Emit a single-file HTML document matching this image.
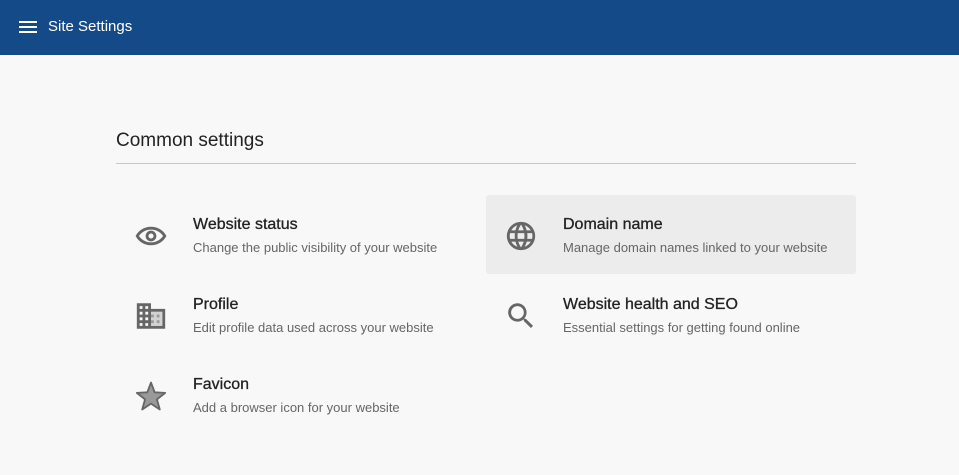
<!DOCTYPE html>
<html><head><style>
*{margin:0;padding:0;box-sizing:border-box}
body{width:959px;height:475px;background:#f8f8f8;font-family:"Liberation Sans",sans-serif;overflow:hidden;position:relative}
.hdr{position:absolute;left:0;top:0;width:959px;height:55px;background:#154a88;color:#fff}
.hdr .t{position:absolute;left:48px;top:18px;font-size:15px}
.ham{position:absolute;left:19px;top:21px;width:18px}
.ham i{display:block;height:2px;background:#fff;margin-bottom:3px}
h2{position:absolute;left:116px;top:130px;font-size:19px;font-weight:normal;color:#222}
.hr{position:absolute;left:116px;top:163px;width:740px;height:1px;background:#c8c8c8}
.it{position:absolute;width:370px;height:79px;border-radius:3px}
.it.hl{background:#ececec}
.it svg{position:absolute;left:18px;top:24px;width:34px;height:34px}
.it b{position:absolute;left:77px;top:21px;font-size:16px;font-weight:normal;color:#222;-webkit-text-stroke:0.3px #222}
.it span{position:absolute;left:77px;top:45px;font-size:13px;color:#666}
</style></head><body>
<div class="hdr"><div class="ham"><i></i><i></i><i></i></div><div class="t">Site Settings</div></div>
<h2>Common settings</h2>
<div class="hr"></div>
<div class="it" style="left:116px;top:195px"><svg viewBox="0 0 24 24"><path d="M12 6.5C7.5 6.5 4 9 2.3 12 4 15 7.5 17.5 12 17.5S20 15 21.7 12C20 9 16.5 6.5 12 6.5z" fill="none" stroke="#666" stroke-width="2"/><circle cx="12" cy="12" r="2.8" fill="none" stroke="#666" stroke-width="2"/></svg><b>Website status</b><span>Change the public visibility of your website</span></div>
<div class="it hl" style="left:486px;top:195px"><svg viewBox="0 0 24 24" fill="#666"><path d="M12 2a10 10 0 1 0 0 20 10 10 0 0 0 0-20zm6.9 6h-2.9a15.6 15.6 0 0 0-1.4-3.6A8 8 0 0 1 18.9 8zM12 4c.8 1.2 1.5 2.5 1.9 4h-3.8c.4-1.4 1.1-2.8 1.9-4zM4.3 14a8 8 0 0 1 0-4h3.4a16.5 16.5 0 0 0 0 4H4.3zm.8 2h3c.3 1.3.8 2.5 1.4 3.6A8 8 0 0 1 5.1 16zm3-8h-3a8 8 0 0 1 4.3-3.6C8.8 5.5 8.4 6.7 8.1 8zM12 20c-.8-1.2-1.5-2.5-1.9-4h3.8c-.4 1.4-1.1 2.8-1.9 4zm2.3-6H9.7a14.7 14.7 0 0 1 0-4h4.6a14.7 14.7 0 0 1 0 4zm.3 5.6c.6-1.1 1.1-2.3 1.4-3.6h2.9a8 8 0 0 1-4.3 3.6zm1.8-5.6a16.5 16.5 0 0 0 0-4h3.4a8 8 0 0 1 0 4h-3.4z"/></svg><b>Domain name</b><span>Manage domain names linked to your website</span></div>
<div class="it" style="left:116px;top:275px"><svg viewBox="0 0 24 24" fill="#666"><path d="M12 7V3H2v18h20V7H12zM6 19H4v-2h2v2zm0-4H4v-2h2v2zm0-4H4V9h2v2zm0-4H4V5h2v2zm4 12H8v-2h2v2zm0-4H8v-2h2v2zm0-4H8V9h2v2zm0-4H8V5h2v2zm10 12h-8v-2h2v-2h-2v-2h2v-2h-2V9h8v10zm-2-8h-2v2h2v-2zm0 4h-2v2h2v-2z"/><path d="M12 9h8v10h-8z" fill="#bbb" opacity=".6"/></svg><b>Profile</b><span>Edit profile data used across your website</span></div>
<div class="it" style="left:486px;top:275px"><svg viewBox="0 0 24 24" fill="#666"><path d="M15.5 14h-.8l-.3-.3A6.5 6.5 0 1 0 9.5 16c1.6 0 3.1-.6 4.2-1.6l.3.3v.8l5 5 1.5-1.5-5-5zm-6 0a4.5 4.5 0 1 1 0-9 4.5 4.5 0 0 1 0 9z"/></svg><b>Website health and SEO</b><span>Essential settings for getting found online</span></div>
<div class="it" style="left:116px;top:355px"><svg viewBox="0 0 24 24"><path d="M12 2.5l2.6 6.9 7.4.4-5.8 4.6 2 7.1L12 17.4l-6.2 4.1 2-7.1L2 9.8l7.4-.4z" fill="#999" stroke="#666" stroke-width="1.3" stroke-linejoin="round"/></svg><b>Favicon</b><span>Add a browser icon for your website</span></div>
</body></html>
